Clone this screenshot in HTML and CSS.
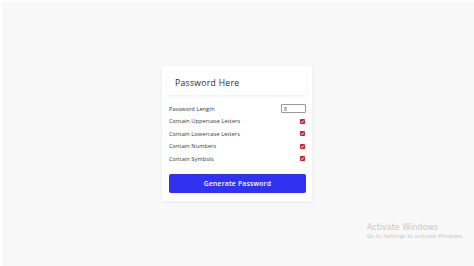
FILE: index.html
```html
<!DOCTYPE html>
<html lang="en">
<head>
    <meta charset="UTF-8">
    <meta name="viewport" content="width=device-width, initial-scale=1.0">
    <title>Password Generator</title>
    <link rel="stylesheet" href="styles.css">
</head>
<body>
    <div class="screen">
        <div class="card">
            <div class="output">Password Here</div>
            <div class="options">
                <div class="row">
                    <label>Password Length</label>
                    <input type="text" class="length" value="8">
                </div>
                <div class="row">
                    <label>Contain Uppercase Letters</label>
                    <span class="check"><svg viewBox="0 0 10 10"><path d="M2 5.2 L4.2 7.3 L8 2.8" /></svg></span>
                </div>
                <div class="row">
                    <label>Contain Lowercase Letters</label>
                    <span class="check"><svg viewBox="0 0 10 10"><path d="M2 5.2 L4.2 7.3 L8 2.8" /></svg></span>
                </div>
                <div class="row">
                    <label>Contain Numbers</label>
                    <span class="check"><svg viewBox="0 0 10 10"><path d="M2 5.2 L4.2 7.3 L8 2.8" /></svg></span>
                </div>
                <div class="row">
                    <label>Contain Symbols</label>
                    <span class="check"><svg viewBox="0 0 10 10"><path d="M2 5.2 L4.2 7.3 L8 2.8" /></svg></span>
                </div>
            </div>
            <button class="btn">Generate Password</button>
        </div>
        <div class="watermark">
            <p class="wm-title">Activate Windows</p>
            <p class="wm-sub">Go to Settings to activate Windows.</p>
        </div>
    </div>
</body>
</html>
```

FILE: styles.css
```css
body {
    margin: 0;
    background: #ffffff;
    font-family: "Open Sans", "DejaVu Sans", sans-serif;
    color: #333333;
}
.screen {
    position: relative;
    margin: 2px 0 0 2px;
    height: 264px;
    background: #f8f8f8;
    display: flex;
    justify-content: center;
    align-items: center;
}
.card {
    background: white;
    width: 150px;
    height: 135px;
    box-sizing: border-box;
    padding: 6px 5px 8px;
    margin: -2px 0 0 -2px;
    box-shadow: 0px 1px 4px rgba(0, 0, 0, 0.06);
}
.output {
    height: 23px;
    line-height: 23px;
    padding-left: 8px;
    font-size: 8.6px;
    letter-spacing: 0.3px;
    color: #2b2b2b;
    box-shadow: 0px 1px 3px rgba(0, 0, 0, 0.08);
}
.options {
    margin-top: 8px;
    padding: 0 1px 0 2px;
}
.row {
    display: flex;
    justify-content: space-between;
    align-items: center;
    height: 12.5px;
    font-size: 5.6px;
    letter-spacing: 0.08px;
    color: #333333;
}
.length {
    width: 25px;
    height: 9px;
    box-sizing: border-box;
    border: 1px solid #9a9a9a;
    border-radius: 1px;
    font-size: 5px;
    padding: 0 2px;
    font-family: inherit;
    color: #444;
}
.check {
    width: 5px;
    height: 5px;
    background: #c8202c;
    border-radius: 1px;
    margin-right: 1px;
    display: flex;
}
.check svg {
    width: 5px;
    height: 5px;
    fill: none;
    stroke: white;
    stroke-width: 1.8;
}
.btn {
    display: block;
    margin: 9px 2px 0;
    width: calc(100% - 3px);
    height: 19px;
    border: none;
    border-radius: 2px;
    background: #3131f2;
    color: white;
    font-family: inherit;
    font-size: 6.8px;
    font-weight: 600;
    letter-spacing: 0.2px;
}
.watermark {
    position: absolute;
    left: 365px;
    top: 221px;
    color: #c8c8c8;
}
.wm-title {
    margin: 0;
    font-size: 8px;
    font-family: "DejaVu Sans", sans-serif;
}
.wm-sub {
    margin: 1px 0 0;
    font-size: 5.4px;
    font-family: "DejaVu Sans", sans-serif;
}
```
